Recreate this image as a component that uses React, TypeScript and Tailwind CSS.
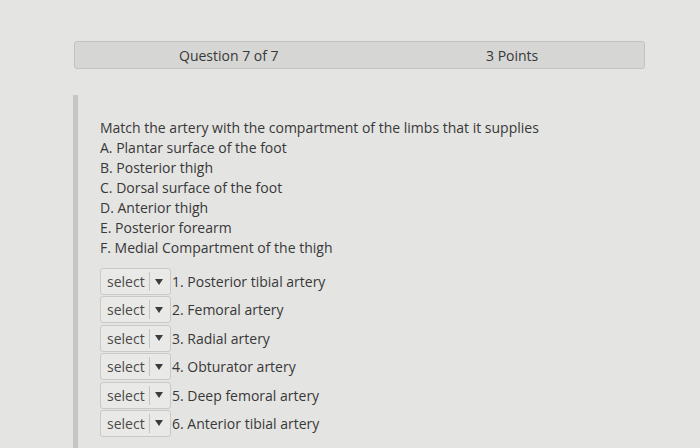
const items = [
  "A. Plantar surface of the foot",
  "B. Posterior thigh",
  "C. Dorsal surface of the foot",
  "D. Anterior thigh",
  "E. Posterior forearm",
  "F. Medial Compartment of the thigh",
];

const arteries = [
  "1. Posterior tibial artery",
  "2. Femoral artery",
  "3. Radial artery",
  "4. Obturator artery",
  "5. Deep femoral artery",
  "6. Anterior tibial artery",
];

function SelectBox() {
  return (
    <div className="flex h-[27px] w-[71px] items-center rounded-[3px] border border-[#c9c9c7] bg-[#e9e9e7]">
      <span className="w-[48px] pl-[6px] text-[14px] text-[#4a4a4a]">select</span>
      <span className="h-[19px] w-px bg-[#c4c4c2]" />
      <svg width="8" height="6" viewBox="0 0 8 6" className="ml-[5px]">
        <path d="M0 0 L8 0 L4 6 Z" fill="#3c3c3c" />
      </svg>
    </div>
  );
}

export default function App() {
  return (
    <div
      className="h-[448px] w-[700px] overflow-hidden bg-[#e4e4e2] text-[#383838]"
      style={{ fontFamily: '"Open Sans", "Liberation Sans", sans-serif' }}
    >
      <div className="pl-[74px] pt-[41px]">
        <div className="flex h-[28px] w-[571px] items-center rounded-[3px] border border-[#c2c2c0] bg-[#d6d6d4] pl-[104px] text-[14px]">
          <span className="w-[307px]">Question 7 of 7</span>
          <span>3 Points</span>
        </div>
      </div>

      <div className="ml-[73px] mt-[26px] flex">
        <div className="h-[360px] w-[5px] bg-[#c6c6c4]" />
        <div className="pl-[22px] pt-[23px]">
          <div className="text-[14px] leading-[20px]">
            <div>Match the artery with the compartment of the limbs that it supplies</div>
            {items.map((t) => (
              <div key={t}>{t}</div>
            ))}
          </div>
          <div className="mt-[10px] flex flex-col gap-[1.4px]">
            {arteries.map((a) => (
              <div key={a} className="flex items-center">
                <SelectBox />
                <span className="pl-[1px] text-[14px]">{a}</span>
              </div>
            ))}
          </div>
        </div>
      </div>
    </div>
  );
}
